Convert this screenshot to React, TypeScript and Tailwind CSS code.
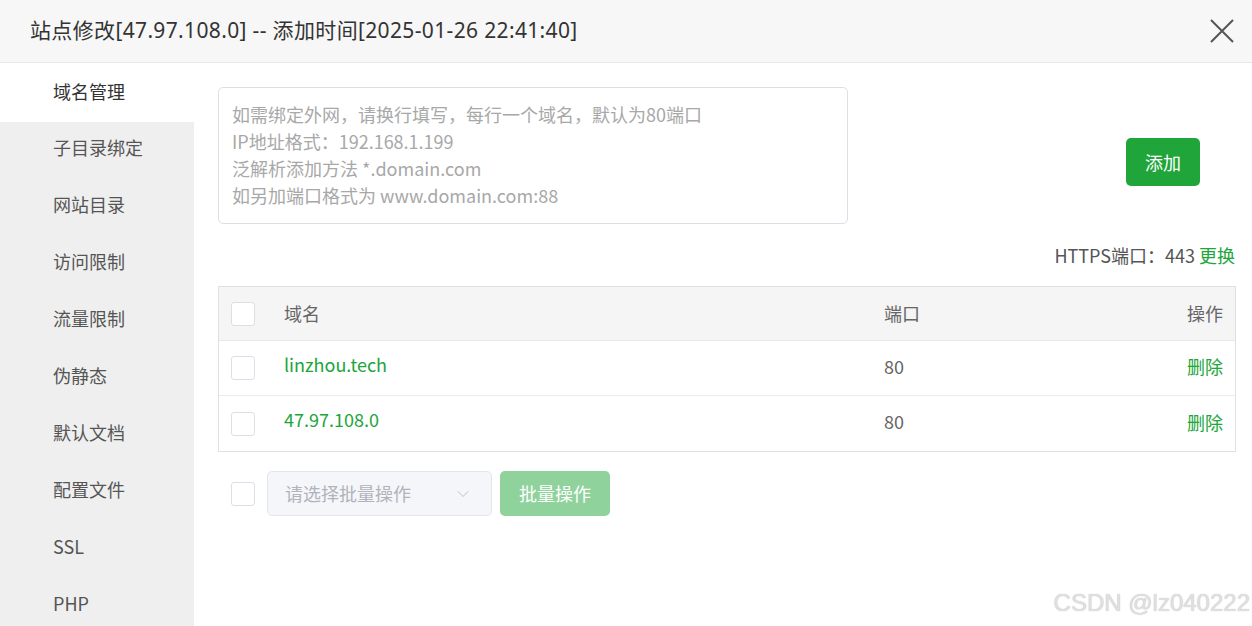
import { ChevronDown } from "lucide-react";

const menu = [
  "域名管理",
  "子目录绑定",
  "网站目录",
  "访问限制",
  "流量限制",
  "伪静态",
  "默认文档",
  "配置文件",
  "SSL",
  "PHP",
];

const domains = [
  { name: "linzhou.tech", port: 80 },
  { name: "47.97.108.0", port: 80 },
];

function Checkbox() {
  return <span className="block w-6 h-6 rounded-[3px] border border-[#dcdfe6] bg-white" />;
}

export default function App() {
  return (
    <div
      className="relative w-[1252px] h-[626px] overflow-hidden bg-white text-[#555]"
      style={{ fontFamily: '"Noto Sans CJK SC", "Noto Sans", sans-serif' }}
    >
      {/* Header */}
      <div className="flex items-center justify-between h-[63px] bg-[#f7f7f7] border-b border-[#e8e8e8] pl-[30px] pr-[17px]">
        <h1
          className="text-[21px] text-[#333] font-normal tracking-[0.35px]"
          style={{ fontFamily: '"Noto Sans", "Noto Sans CJK SC", sans-serif' }}
        >
          站点修改[47.97.108.0] -- 添加时间[2025-01-26 22:41:40]
        </h1>
        <svg width="26" height="26" viewBox="0 0 26 26" className="text-[#555]">
          <path d="M2 2 L24 24 M24 2 L2 24" stroke="currentColor" strokeWidth="2" />
        </svg>
      </div>

      <div className="flex h-[563px]">
        {/* Sidebar */}
        <div className="w-[194px] shrink-0 bg-[#efefef]">
          {menu.map((item, i) => (
            <div
              key={item}
              className={`flex items-center pl-[53px] text-[18px] ${
                i === 0 ? "h-[59px] pb-[3px] bg-white text-[#333]" : "h-[57px] pb-[6px] text-[#555]"
              }`}
            >
              {item}
            </div>
          ))}
        </div>

        {/* Content */}
        <div className="flex-1 pl-6 pr-4 pt-6">
          <div className="flex items-center">
            <div className="w-[630px] h-[137px] border border-[#dcdfe6] rounded-[5px] px-[13px] pt-[13px] text-[18px] leading-[27px] text-[#a8a8a8]">
              <div>如需绑定外网，请换行填写，每行一个域名，默认为80端口</div>
              <div>IP地址格式：192.168.1.199</div>
              <div>泛解析添加方法 *.domain.com</div>
              <div>如另加端口格式为 www.domain.com:88</div>
            </div>
            <div className="flex-1 flex justify-end pr-[36px] pt-[13px]">
              <button className="w-[74px] h-[48px] rounded-[5px] bg-[#20a53a] text-white text-[18px]">
                添加
              </button>
            </div>
          </div>

          <div className="flex justify-end items-center h-[62px] text-[18px] text-[#555] pr-px">
            HTTPS端口：443&nbsp;<span className="text-[#20a53a]">更换</span>
          </div>

          {/* Table */}
          <div className="border border-[#e0e0e0] text-[18px]">
            <div className="flex items-center h-[54px] bg-[#f5f5f5] border-b border-[#e8e8e8] pl-[12px] pr-[12px] text-[#666]">
              <Checkbox />
              <span className="ml-[29px] w-[600px]">域名</span>
              <span className="flex-1">端口</span>
              <span>操作</span>
            </div>
            {domains.map((d, i) => (
              <div
                key={d.name}
                className={`flex items-center h-[55px] pl-[12px] pr-[12px] ${
                  i === 0 ? "border-b border-[#ececec]" : ""
                }`}
              >
                <Checkbox />
                <span className="ml-[29px] w-[600px] text-[#20a53a] -mt-2">{d.name}</span>
                <span className="flex-1 text-[#666] -mt-1">{d.port}</span>
                <span className="text-[#20a53a] -mt-[3px]">删除</span>
              </div>
            ))}
          </div>

          {/* Batch */}
          <div className="flex items-center mt-[19px] pl-[13px] gap-3">
            <Checkbox />
            <div className="w-[225px] h-[45px] flex items-center justify-between rounded-[5px] border border-[#e4e6ee] bg-[#f5f6fa] pl-[17px] pr-[18px] text-[18px] text-[#b0b3bb]">
              请选择批量操作
              <ChevronDown size={20} strokeWidth={1.1} className="text-[#b8bbc2]" />
            </div>
            <button className="-ml-1 w-[110px] h-[45px] rounded-[5px] bg-[#90d29c] text-white text-[18px]">
              批量操作
            </button>
          </div>
        </div>
      </div>

      {/* Watermark */}
      <div
        className="absolute right-[2px] bottom-[5px] text-[24px] text-[#e0e0e0]"
        style={{ fontFamily: '"Liberation Sans", Arial, sans-serif', textShadow: "0 0 1px #b8b8b8" }}
      >
        CSDN @lz040222
      </div>
    </div>
  );
}
